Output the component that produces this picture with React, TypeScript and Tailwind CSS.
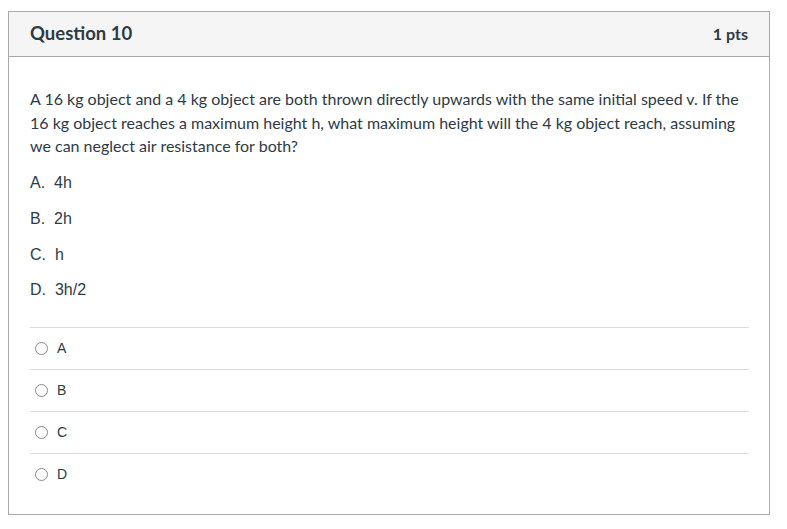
import React from "react";

const options = ["A.\u00a0 4h", "B.\u00a0 2h", "C.\u00a0 h", "D.\u00a0 3h/2"];
const answers = ["A", "B", "C", "D"];

export default function App() {
  return (
    <div className="min-h-[529px] bg-white pl-[8px] pt-[11px] pr-[17px]">
      <div className="border border-[#a9a9a9] w-[762px] h-[504px] flex flex-col">
        {/* Header */}
        <div className="h-[45px] flex items-center justify-between bg-[#f5f5f5] border-b border-[#a9a9a9] px-[21px] text-[#2d3b45] font-['Lato',sans-serif] font-bold">
          <span className="text-[18.5px]">Question 10</span>
          <span className="text-[16px]">1 pts</span>
        </div>

        {/* Body */}
        <div className="pl-[21px] pr-[20px] pt-[30px]">
          <p className="text-[16px] leading-[23.5px] text-[#2d3b45] font-['Lato',sans-serif] pr-[4px]">
            A 16 kg object and a 4 kg object are both thrown directly upwards with the same initial speed v. If the 16 kg object reaches a maximum height h, what maximum height will the 4 kg object reach, assuming we can neglect air resistance for both?
          </p>

          <div className="mt-[8px] flex flex-col font-['Liberation_Sans',Arial,sans-serif] text-[16px] text-[#2d3b45]">
            {options.map((o) => (
              <div key={o} className="h-[35.7px] flex items-center">
                {o}
              </div>
            ))}
          </div>

          <div className="mt-[19px] flex flex-col">
            {answers.map((a) => (
              <div
                key={a}
                className="border-t border-[#dcdcdc] h-[42px] flex items-center pl-[5px] pb-[1px]"
              >
                <span className="w-[13px] h-[13px] rounded-full border border-[#8a8a8a] bg-white" />
                <span className="ml-[9px] text-[14px] text-[#2d3b45] font-['Liberation_Sans',Arial,sans-serif]">
                  {a}
                </span>
              </div>
            ))}
          </div>
        </div>
      </div>
    </div>
  );
}
